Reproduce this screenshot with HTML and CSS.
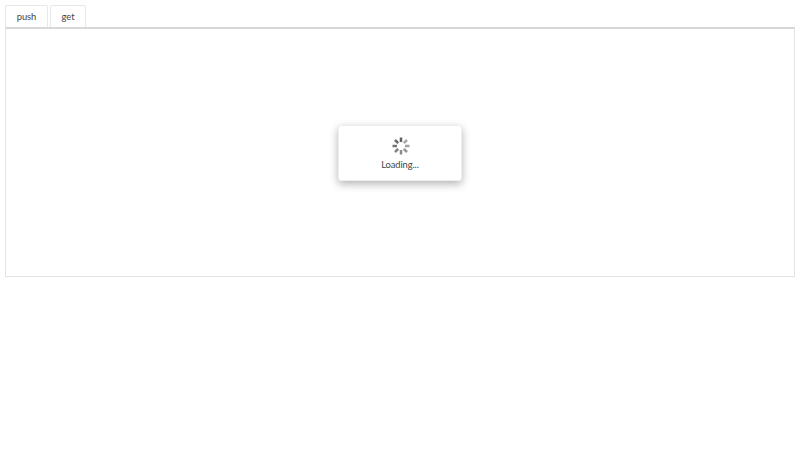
FILE: index.html
```html
<!DOCTYPE html>
<html lang="en">
<head>
<meta charset="utf-8">
<title>Tabs</title>
<link rel="stylesheet" href="styles.css">
</head>
<body>
<div class="tabs">
  <div class="tab">push</div>
  <div class="tab">get</div>
</div>
<div class="panel">
  <div class="loading">
    <svg class="spinner" viewBox="0 0 18 18" width="18" height="18" aria-hidden="true">
      <g stroke-width="2.5" stroke-linecap="butt" fill="none">
        <line x1="9" y1="0.5" x2="9" y2="5" stroke="#606060"/>
        <line x1="15" y1="3" x2="11.8" y2="6.2" stroke="#a8a8a8"/>
        <line x1="17.5" y1="9" x2="13" y2="9" stroke="#a0a0a0"/>
        <line x1="15" y1="15" x2="11.8" y2="11.8" stroke="#969696"/>
        <line x1="9" y1="17.5" x2="9" y2="13" stroke="#8c8c8c"/>
        <line x1="3" y1="15" x2="6.2" y2="11.8" stroke="#808080"/>
        <line x1="0.5" y1="9" x2="5" y2="9" stroke="#747474"/>
        <line x1="3" y1="3" x2="6.2" y2="6.2" stroke="#6a6a6a"/>
      </g>
    </svg>
    <div class="label">Loading...</div>
  </div>
</div>
</body>
</html>
```
FILE: styles.css
```css
html, body {
  margin: 0;
  padding: 0;
  background: #fff;
}
body {
  padding: 5px;
  font-family: Lato, Roboto, sans-serif;
  font-size: 9.4px;
  letter-spacing: -0.1px;
  color: #444;
}
.tabs {
  display: flex;
  gap: 2px;
  height: 22px;
}
.tab {
  box-sizing: border-box;
  height: 22px;
  width: 43px;
  display: flex;
  align-items: center;
  justify-content: center;
  border: 1px solid #e8e8e8;
  border-bottom: 0;
  border-radius: 2px 2px 0 0;
}
.tab + .tab {
  width: 36px;
}
.panel {
  box-sizing: border-box;
  height: 250px;
  border: 1px solid #e4e4e4;
  border-top: 2px solid #d8d8d8;
  display: flex;
  align-items: center;
  justify-content: center;
}
.loading {
  box-sizing: border-box;
  width: 124px;
  height: 56px;
  margin-top: 1px;
  background: #fff;
  border: 1px solid #eee;
  border-radius: 3px;
  box-shadow: 0 3px 8px rgba(0, 0, 0, 0.3);
  display: flex;
  flex-direction: column;
  align-items: center;
  padding-top: 11px;
  gap: 3px;
}
.spinner {
  display: block;
  margin-left: 2px;
}
.label {
  line-height: 14px;
}
```
